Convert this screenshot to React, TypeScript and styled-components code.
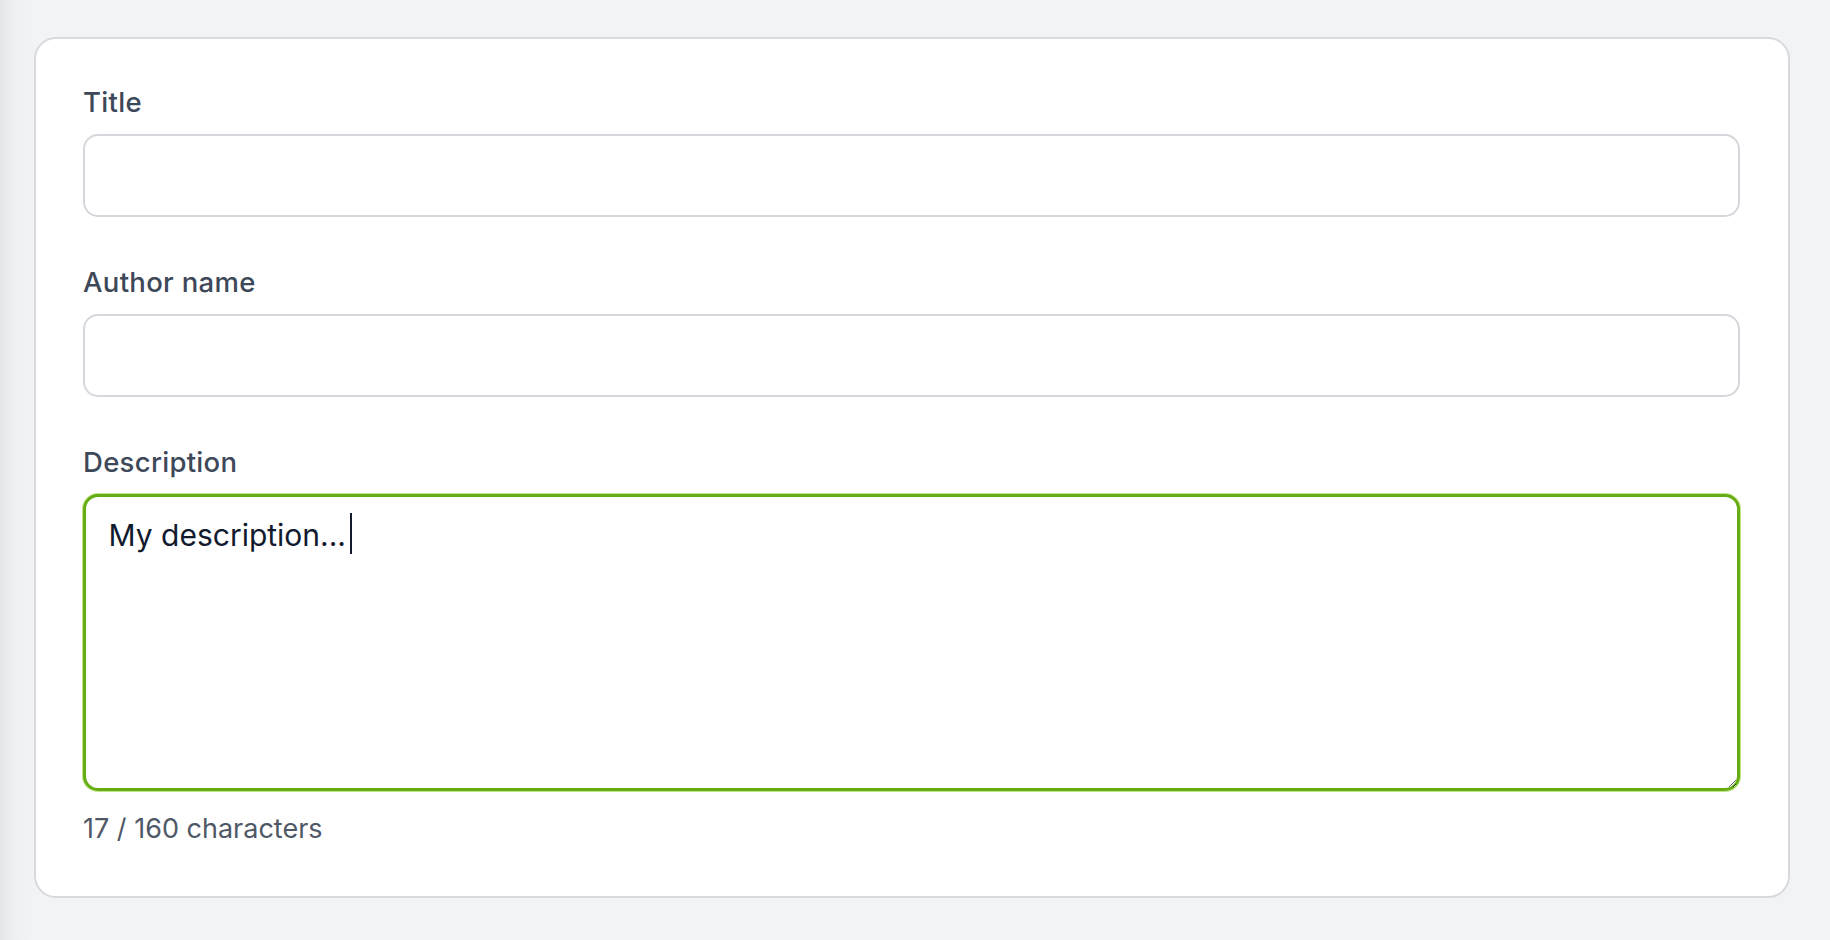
import React, { useEffect, useRef, useState } from "react";
import styled, { createGlobalStyle } from "styled-components";

const Global = createGlobalStyle`
  html, body {
    margin: 0;
    padding: 0;
    background: linear-gradient(to right, #e4e6e9 0px, #eef0f2 14px, #f2f3f5 34px, #f2f3f5 100%);
    font-family: Inter, "Noto Sans", sans-serif;
  }
  body { min-height: 940px; }
`;

const Page = styled.div`
  padding: 37px 40px 42px 34px;
`;

const Card = styled.form`
  background: #ffffff;
  border: 2px solid #d7d9de;
  border-radius: 22px;
  padding: 42px 48px 46px 47px;
  display: flex;
  flex-direction: column;
`;

const Field = styled.div<{ $gap?: number }>`
  display: flex;
  flex-direction: column;
  gap: 11px;
  margin-bottom: ${(p) => p.$gap ?? 44}px;
`;

const Label = styled.label`
  font-family: Inter, "Noto Sans", sans-serif;
  font-size: 27.5px;
  line-height: 42px;
  font-weight: 500;
  color: #3d4859;
  letter-spacing: 0.3px;
`;

const TextInput = styled.input`
  box-sizing: border-box;
  width: 100%;
  height: 83px;
  border: 2px solid #d5d7dc;
  border-radius: 15px;
  background: #ffffff;
  font-family: Inter, "Noto Sans", sans-serif;
  font-size: 30px;
  padding: 0 24px;
  color: #0f172a;
  outline: none;
`;

const AreaWrap = styled.div`
  position: relative;
`;

const TextArea = styled.textarea<{ $active?: boolean }>`
  box-sizing: border-box;
  width: 100%;
  height: 297px;
  border: 3px solid ${(p) => (p.$active ? "#66ad14" : "#d5d7dc")};
  box-shadow: ${(p) => (p.$active ? "0 0 0 1px rgba(132, 204, 22, 0.5)" : "none")};
  border-radius: 15px;
  background: #ffffff;
  font-family: Inter, "Noto Sans", sans-serif;
  font-size: 30px;
  line-height: 45px;
  padding: 15.5px 22.5px;
  color: #111a2e;
  caret-color: transparent;
  outline: none;
  resize: vertical;
  display: block;
`;

const Caret = styled.span`
  position: absolute;
  top: 19px;
  width: 2px;
  height: 41px;
  background: #111a2e;
  pointer-events: none;
`;

const Counter = styled.p`
  margin: 0;
  font-family: Inter, "Noto Sans", sans-serif;
  font-size: 27px;
  line-height: 42px;
  font-weight: 400;
  color: #4f5867;
  letter-spacing: 0px;
`;

const FONT = '30px Inter, "Noto Sans", sans-serif';
const TEXT_LEFT = 25.5;

export default function App() {
  const ref = useRef<HTMLTextAreaElement>(null);
  const [value, setValue] = useState("My description...");
  const [caretX, setCaretX] = useState(TEXT_LEFT + 236);

  useEffect(() => {
    const el = ref.current;
    if (el) {
      el.focus();
      el.setSelectionRange(value.length, value.length);
    }
  }, []);

  useEffect(() => {
    const canvas = document.createElement("canvas");
    const ctx = canvas.getContext("2d");
    const measure = () => {
      if (!ctx) return;
      ctx.font = FONT;
      const lines = value.split("\n");
      setCaretX(TEXT_LEFT + ctx.measureText(lines[lines.length - 1]).width + 4);
    };
    measure();
    if (document.fonts && document.fonts.ready) {
      document.fonts.ready.then(measure);
    }
  }, [value]);

  return (
    <>
      <Global />
      <Page>
        <Card onSubmit={(e) => e.preventDefault()}>
          <Field>
            <Label htmlFor="title">Title</Label>
            <TextInput id="title" type="text" />
          </Field>
          <Field>
            <Label htmlFor="author">Author name</Label>
            <TextInput id="author" type="text" />
          </Field>
          <Field $gap={17}>
            <Label htmlFor="description">Description</Label>
            <AreaWrap>
              <TextArea
                id="description"
                ref={ref}
                $active
                value={value}
                onChange={(e) => setValue(e.target.value)}
                maxLength={160}
              />
              {!value.includes("\n") && <Caret style={{ left: caretX }} />}
            </AreaWrap>
          </Field>
          <Counter>{value.length} / 160 characters</Counter>
        </Card>
      </Page>
    </>
  );
}
